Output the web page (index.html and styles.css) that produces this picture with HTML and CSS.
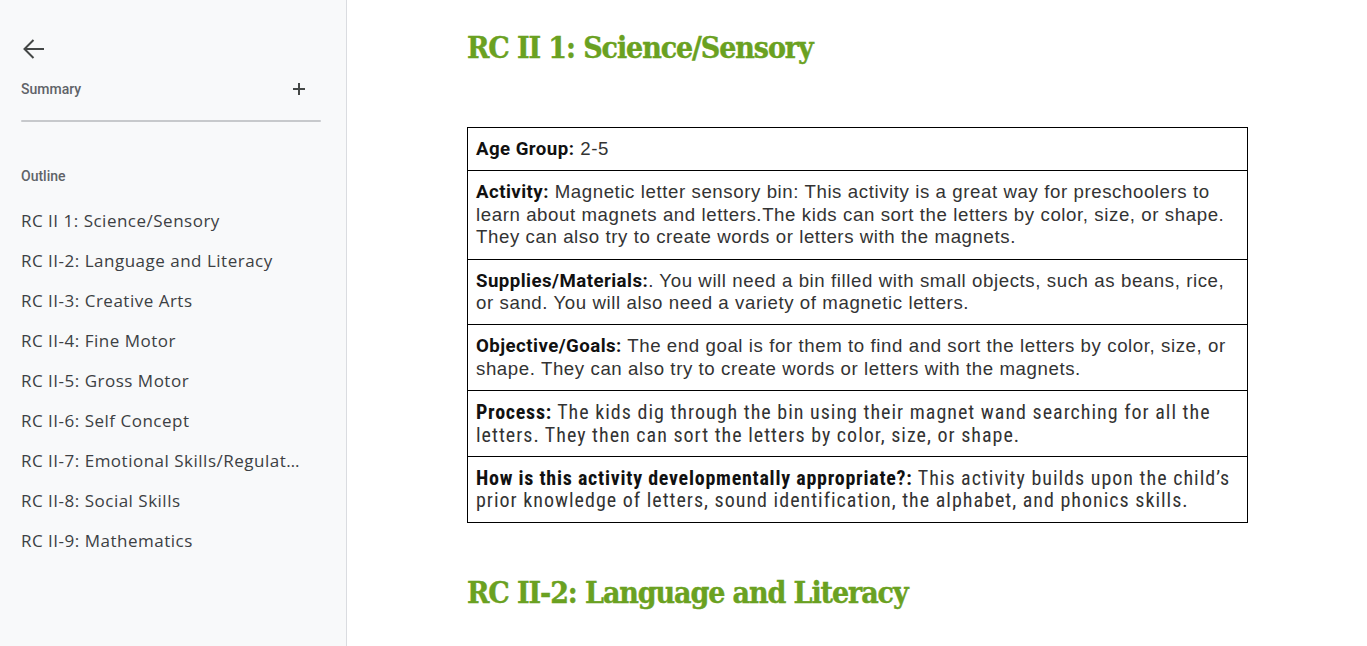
FILE: index.html
```html
<!DOCTYPE html>
<html>
<head>
<meta charset="utf-8">
<link rel="stylesheet" href="styles.css">
</head>
<body>
<div class="app">
  <aside class="side">
    <div class="back">
      <svg width="24" height="24" viewBox="0 0 24 24"><path d="M22 12H2.5M11.5 3L2.5 12l9 9" fill="none" stroke="#444746" stroke-width="2"/></svg>
    </div>
    <div class="sumrow">
      <span class="label">Summary</span>
      <svg class="plus" width="12" height="12" viewBox="0 0 12 12"><path d="M6 0v12M0 6h12" stroke="#444746" stroke-width="2"/></svg>
    </div>
    <div class="divider"></div>
    <div class="label outline">Outline</div>
    <ul class="toc">
      <li>RC II 1: Science/Sensory</li>
      <li>RC II-2: Language and Literacy</li>
      <li>RC II-3: Creative Arts</li>
      <li>RC II-4: Fine Motor</li>
      <li>RC II-5: Gross Motor</li>
      <li>RC II-6: Self Concept</li>
      <li>RC II-7: Emotional Skills/Regulation</li>
      <li>RC II-8: Social Skills</li>
      <li>RC II-9: Mathematics</li>
    </ul>
  </aside>
  <main class="doc">
    <h1 class="h">RC II 1: Science/Sensory</h1>
    <table class="tbl">
      <tr><td><b>Age Group:</b> 2-5</td></tr>
      <tr><td><b>Activity:</b> Magnetic letter sensory bin: This activity is a great way for preschoolers to<br>learn about magnets and letters.The kids can sort the letters by color, size, or shape.<br>They can also try to create words or letters with the magnets.</td></tr>
      <tr><td><b>Supplies/Materials:</b>. You will need a bin filled with small objects, such as beans, rice,<br>or sand. You will also need a variety of magnetic letters.</td></tr>
      <tr><td><b>Objective/Goals:</b> The end goal is for them to find and sort the letters by color, size, or<br>shape. They can also try to create words or letters with the magnets.</td></tr>
      <tr class="narrow"><td><b>Process:</b> The kids dig through the bin using their magnet wand searching for all the<br>letters. They then can sort the letters by color, size, or shape.</td></tr>
      <tr class="narrow"><td><b>How is this activity developmentally appropriate?:</b> This activity builds upon the child’s<br>prior knowledge of letters, sound identification, the alphabet, and phonics skills.</td></tr>
    </table>
    <h1 class="h h2">RC II-2: Language and Literacy</h1>
  </main>
</div>
</body>
</html>
```

FILE: styles.css
```css
html, body { margin: 0; padding: 0; background: #fff; }
body { width: 1367px; height: 646px; overflow: hidden; }
.app { display: flex; height: 646px; }
.side {
  width: 347px;
  flex: 0 0 347px;
  background: #f8f9fa;
  border-right: 1px solid #dadce0;
  padding: 0 25px 0 21px;
  box-sizing: border-box;
  font-family: Roboto, "Liberation Sans", sans-serif;
}
.back { height: 24px; margin-top: 37px; padding-left: 1px; }
.back svg { display: block; }
.sumrow {
  display: flex;
  justify-content: space-between;
  align-items: center;
  margin-top: 17px;
  height: 22px;
}
.plus { margin-right: 16px; }
.label { font-size: 14px; font-weight: 500; color: #5f6368; }
.divider { height: 2px; background: #c7c9cc; border-radius: 1px; margin-top: 20px; width: 300px; }
.outline { margin-top: 46px; line-height: 16px; }
.toc { list-style: none; margin: 17px 0 0; padding: 0; }
.toc li {
  height: 40px;
  line-height: 40px;
  font-size: 17px;
  letter-spacing: 0.5px;
  color: #3c4043;
  font-family: "Open Sans", Roboto, sans-serif;
  white-space: nowrap;
  overflow: hidden;
  text-overflow: ellipsis;
  max-width: 281px;
}
.doc { flex: 1; padding: 0 0 0 120px; }
.h {
  font-family: "DejaVu Serif Condensed", "DejaVu Serif", serif;
  font-weight: bold;
  color: #6aa121;
  font-size: 30px;
  letter-spacing: -1.1px;
  line-height: 36px;
  margin: 30px 0 0;
  -webkit-text-stroke: 0.4px #6aa121;
}
.tbl {
  border-collapse: collapse;
  width: 781px;
  margin-top: 61px;
  font-family: "Liberation Sans", Arial, sans-serif;
  font-size: 18.67px;
  line-height: 22.4px;
  letter-spacing: 0.58px;
  color: #333;
}
.tbl td { border: 1px solid #000; padding: 10px 8px 10px 8px; vertical-align: top; white-space: nowrap; }
.tbl b { font-family: Roboto, "Liberation Sans", sans-serif; font-weight: 700; color: #111; letter-spacing: 0.45px; }
.narrow td { font-family: "Liberation Sans Narrow", "Roboto Condensed", sans-serif; font-size: 20px; letter-spacing: 1px; }
.narrow b { font-family: "Liberation Sans Narrow", "Roboto Condensed", sans-serif; letter-spacing: 0.75px; }
.h2 { margin-top: 52px; }
```
